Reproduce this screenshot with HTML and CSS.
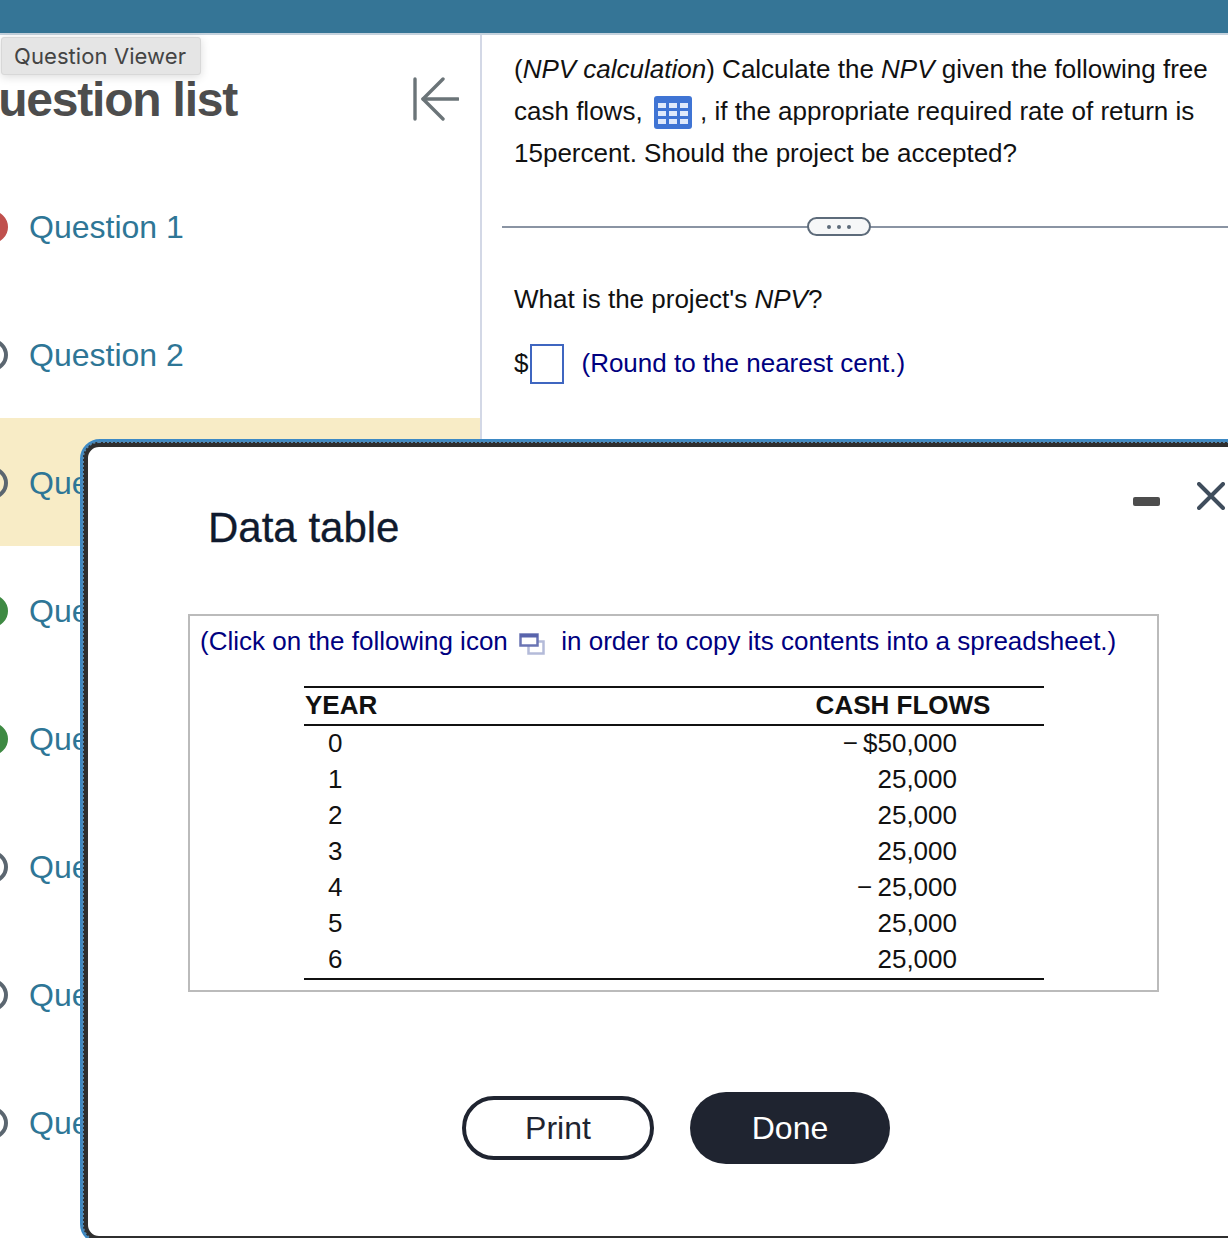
FILE: index.html
```html
<!DOCTYPE html>
<html lang="en">
<head>
<meta charset="utf-8">
<title>Question Viewer</title>
<link rel="stylesheet" href="styles.css">
</head>
<body>
<header class="topbar"></header>
<main class="layout">
  <aside class="sidebar">
    <div class="side-head">
      <h2 class="side-title">Question list</h2>
      <svg class="collapse" width="48" height="44" viewBox="0 0 48 44" fill="none" stroke="#6b7478" stroke-width="3.4" stroke-linecap="round" stroke-linejoin="round"><path d="M4 2V42"/><path d="M47 22H12"/><path d="M32 2L12 22L32 42"/></svg>
    </div>
    <ul class="qlist">
      <li class="qitem"><span class="dot dot-red"></span><span class="qname">Question 1</span></li>
      <li class="qitem"><span class="dot"></span><span class="qname">Question 2</span></li>
      <li class="qitem qitem-current"><span class="dot"></span><span class="qname">Question 3</span></li>
      <li class="qitem"><span class="dot dot-green"></span><span class="qname">Question 4</span></li>
      <li class="qitem"><span class="dot dot-green"></span><span class="qname">Question 5</span></li>
      <li class="qitem"><span class="dot"></span><span class="qname">Question 6</span></li>
      <li class="qitem"><span class="dot"></span><span class="qname">Question 7</span></li>
      <li class="qitem"><span class="dot"></span><span class="qname">Question 8</span></li>
    </ul>
  </aside>
  <section class="content">
    <p class="prompt">(<i>NPV calculation</i>) Calculate the <i>NPV</i> given the following free<br>cash flows,
      <svg class="grid-icon" width="38" height="33" viewBox="0 0 38 33"><rect width="38" height="33" rx="3" fill="#3f74d4"/><g fill="#dfe9fb"><rect x="4" y="7" width="8" height="5"/><rect x="15" y="7" width="8" height="5"/><rect x="26" y="7" width="8" height="5"/><rect x="4" y="15" width="8" height="5"/><rect x="15" y="15" width="8" height="5"/><rect x="26" y="15" width="8" height="5"/><rect x="4" y="23" width="8" height="5"/><rect x="15" y="23" width="8" height="5"/><rect x="26" y="23" width="8" height="5"/></g></svg>
      , if the appropriate required rate of return is<br>15percent. Should the project be accepted?</p>
    <div class="divider"><span class="pill"><i></i><i></i><i></i></span></div>
    <p class="ask">What is the project's <i>NPV</i>?</p>
    <div class="answer"><span>$</span><span class="field"></span><span class="hint">(Round to the nearest cent.)</span></div>
  </section>
</main>
<div class="tooltip">Question Viewer</div>
<div class="modal-frame">
  <div class="modal">
    <div class="win-controls">
      <span class="minimize"></span>
      <svg width="28" height="28" viewBox="0 0 28 28" fill="none" stroke="#3f4d5c" stroke-width="4" stroke-linecap="round"><path d="M2 2L26 26M26 2L2 26"/></svg>
    </div>
    <h1 class="modal-title">Data table</h1>
    <div class="data-box">
      <p class="note">(Click on the following icon
        <svg class="copy-icon" width="26" height="24" viewBox="0 0 26 24" fill="none"><rect x="9.500" y="9.500" width="15" height="12" stroke="#b4bbd9" stroke-width="2.500"/><rect x="1.500" y="2.500" width="17" height="11" fill="#fff" stroke="#6a74b4" stroke-width="2.500"/><rect x="1" y="2" width="18" height="3.500" fill="#5964ac"/></svg>
        in order to copy its contents into a spreadsheet.)</p>
      <table class="flows">
        <thead><tr><th class="c-year">YEAR</th><th class="c-cash">CASH FLOWS</th></tr></thead>
        <tbody>
          <tr><td class="year">0</td><td class="cash">−&#8201;$50,000</td></tr>
          <tr><td class="year">1</td><td class="cash">25,000</td></tr>
          <tr><td class="year">2</td><td class="cash">25,000</td></tr>
          <tr><td class="year">3</td><td class="cash">25,000</td></tr>
          <tr><td class="year">4</td><td class="cash">−&#8201;25,000</td></tr>
          <tr><td class="year">5</td><td class="cash">25,000</td></tr>
          <tr><td class="year">6</td><td class="cash">25,000</td></tr>
        </tbody>
      </table>
    </div>
    <div class="actions">
      <button class="btn btn-outline">Print</button>
      <button class="btn btn-solid">Done</button>
    </div>
  </div>
</div>
</body>
</html>
```
FILE: styles.css
```css
* { box-sizing: border-box; }
html, body { margin: 0; height: 1238px; overflow: hidden; background: #fff; }
body { position: relative; font-family: "Liberation Sans", Arial, sans-serif; color: #111; }

.topbar { height: 35px; background: #357596; border-bottom: 2px solid #c5d2dd; }

.layout { display: flex; height: 1203px; }
.sidebar { width: 482px; flex: none; border-right: 2px solid #d3d8e6; overflow: hidden; }
.side-head { display: flex; align-items: center; justify-content: space-between; height: 127px; padding: 0 21px 0 0; }
.side-title { margin: 2px 0 0 -38px; font-size: 48px; font-weight: 700; letter-spacing: -1.2px; color: #4d4d4d; line-height: 130px; }
.collapse { display: block; }

.qlist { list-style: none; margin: 0; padding: 0; }
.qitem { display: flex; align-items: center; gap: 21px; height: 128px; margin-left: -24px; padding-top: 2px; }
.qitem-current { background: #f8ecc6; }
.dot { width: 32px; height: 32px; flex: none; border-radius: 50%; border: 4px solid #5b6670; background: transparent; }
.dot-red { background: #c0504d; border-color: #c0504d; }
.dot-green { background: #3e8a43; border-color: #3e8a43; }
.qname { font-size: 32px; color: #2e7696; }

.content { flex: 1; min-width: 0; padding: 13px 0 0 20px; font-size: 26px; }
.prompt { margin: 0 0 0 12px; line-height: 42px; color: #111; white-space: nowrap; }
.grid-icon { vertical-align: -9px; margin: 0 1px 0 4px; }
.divider { position: relative; height: 2px; margin: 52px 0 0; background: #8a94a3; }
.pill { position: absolute; left: 305px; top: -9px; width: 64px; height: 19px; display: flex; align-items: center; justify-content: center; gap: 6px; border: 2px solid #5d6b7a; border-radius: 10px; background: #f6f7f8; }
.pill i { width: 4px; height: 4px; border-radius: 50%; background: #5d6b7a; }
.ask { margin: 56px 0 0 12px; line-height: 30px; }
.answer { display: flex; align-items: center; margin: 29px 0 0 12px; height: 40px; }
.field { width: 34px; height: 40px; margin: 2px 0 0 2px; border: 2px solid #3f66c0; background: #fff; }
.hint { margin-left: 17px; color: #000080; }

.tooltip { position: absolute; left: 1px; top: 37px; width: 200px; height: 38px; line-height: 37px; padding-left: 12px; font-family: "Inter", sans-serif; font-size: 22px; letter-spacing: 0.08px; color: #444; background: #e5e5e5; border: 1px solid #d8d8d8; border-radius: 3px; box-shadow: 0 2px 10px rgba(0,0,0,.14); }

.modal-frame { position: absolute; left: 80px; top: 439px; width: 1192px; height: 805px; border: 3px solid #3d89c4; border-radius: 20px; background: #333; }
.modal { position: relative; height: 100%; padding: 51px 0 0 120px; background: #fff; border: 5px solid #2f2f2f; border-radius: 16px; outline: 2px dotted #5288b0; outline-offset: -1px; }
.win-controls { position: absolute; left: 1045px; top: 35px; display: flex; align-items: center; gap: 37px; }
.minimize { width: 27px; height: 9px; margin-top: 10px; border-radius: 2px; background: #4d4d4d; }
.modal-title { margin: 0; height: 60px; font-size: 42px; font-weight: 400; line-height: 60px; color: #0f1a2e; -webkit-text-stroke: .3px #0f1a2e; }
.data-box { width: 971px; height: 378px; margin: 56px 0 0 -20px; padding: 0 0 0 10px; border: 2px solid #bbb; }
.note { margin: 0; height: 50px; line-height: 50px; font-size: 26px; color: #000080; white-space: nowrap; }
.copy-icon { vertical-align: -6px; margin: 0 9px 0 4px; }
.flows { border-collapse: separate; border-spacing: 0; width: 740px; margin: 20px 0 0 104px; font-size: 26px; border-top: 2px solid #111; border-bottom: 2px solid #111; }
.flows th { height: 38px; padding: 0 0 2px; font-weight: 700; border-bottom: 2px solid #111; }
.flows td { height: 36px; padding: 0 0 2px; }
.c-year { text-align: left; padding-left: 1px !important; }
.c-cash { width: 282px; text-align: center; }
.year { padding-left: 24px !important; }
.cash { text-align: right; padding-right: 87px !important; }

.actions { display: flex; align-items: center; justify-content: center; gap: 36px; width: 936px; margin: 100px 0 0 0; }
.btn { font-family: "Liberation Sans", Arial, sans-serif; font-size: 32px; border-radius: 36px; }
.btn-outline { width: 192px; height: 64px; background: #fff; color: #1f2430; border: 4px solid #1f2430; }
.btn-solid { width: 200px; height: 72px; background: #1f2430; color: #fff; border: 0; }
```
